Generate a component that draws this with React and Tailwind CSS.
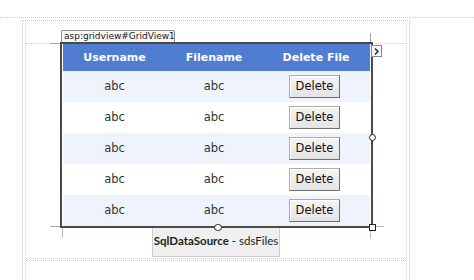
import React from "react";

const rows = [0, 1, 2, 3, 4];

function DeleteButton() {
  return (
    <div className="w-[51px] h-[23px] flex items-center justify-center border border-[#acacac] border-b-[#6f6f6f] border-r-[#6f6f6f] bg-gradient-to-b from-[#f4f4f4] to-[#e4e4e4] text-[11.5px] text-[#111] shadow-[inset_1px_1px_0_#ffffff]">
      Delete
    </div>
  );
}

export default function App() {
  return (
    <div
      className="w-[474px] h-[280px] overflow-hidden bg-white flex flex-col"
      style={{ fontFamily: '"DejaVu Sans", Verdana, sans-serif' }}
    >
      <div className="h-[17px] shrink-0" />
      <div className="h-[3px] shrink-0 border-t border-dotted border-[#cfcfcf]" />
      <div className="ml-[22px] w-[388px] flex-1 border-l border-r border-t border-dotted border-[#cfcfcf] flex">
        <div className="mx-[2px] flex-1 border-l border-r border-dotted border-[#d6d6d6] flex flex-col pt-[9px]">
          {/* tab label */}
          <div className="ml-[35px] w-[114px] h-[12px] border border-b-0 border-[#8e8e8e] rounded-t-[2px] bg-[#f6f6f6] flex items-center pl-[2px] text-[9px] leading-none text-[#1a1a1a] whitespace-nowrap overflow-hidden">
            asp:gridview#GridView1
          </div>

          {/* grid view */}
          <div className="relative ml-[34px] w-[313px] border-2 border-[#4a4a4a] bg-white">
            {/* guide lines */}
            <div className="absolute left-[-36px] top-[-1px] w-[26px] border-t border-dotted border-[#cfcfcf]" />
            <div className="absolute left-[-12px] top-[-1px] w-[10px] border-t border-[#a8a8a8]" />
            <div className="absolute right-[-36px] top-[-1px] w-[32px] border-t border-dotted border-[#cfcfcf]" />
            <div className="absolute right-[0px] top-[-11px] h-[9px] border-l border-[#a8a8a8]" />
            <div className="absolute left-[-12px] bottom-[-1px] w-[10px] border-t border-[#a8a8a8]" />
            <div className="absolute left-[0px] bottom-[-12px] h-[10px] border-l border-[#b8b8b8]" />
            <div className="absolute right-[-13px] bottom-[-1px] w-[11px] border-t border-[#b8b8b8]" />
            <div className="absolute right-[0px] bottom-[-13px] h-[11px] border-l border-[#b8b8b8]" />

            {/* smart tag */}
            <div className="absolute left-full top-[1px] w-[11px] h-[12px] border border-[#7d8aa6] bg-[#f3f6fc] flex items-center justify-center">
              <svg width="5" height="7" viewBox="0 0 5 7">
                <path d="M1 0.5 L4 3.5 L1 6.5" fill="none" stroke="#222" strokeWidth="1.4" />
              </svg>
            </div>

            {/* handles */}
            <div className="absolute right-[-5px] top-[90px] w-[7px] h-[7px] rounded-full border border-[#222] bg-white" />
            <div className="absolute left-[152px] bottom-[-5px] w-[8px] h-[7px] rounded-full border border-[#222] bg-white" />
            <div className="absolute right-[-5px] bottom-[-5px] w-[7px] h-[7px] border border-[#222] bg-white" />

            <div className="px-px">
              <div className="grid grid-cols-[103px_96px_108px] h-[27px] bg-[#507cd1] text-white font-bold text-[11px] items-center pt-px">
                <div className="text-center">Username</div>
                <div className="text-center">Filename</div>
                <div className="text-center">Delete File</div>
              </div>
              {rows.map((i) => (
                <div
                  key={i}
                  className={`grid grid-cols-[103px_96px_108px] h-[31px] items-center text-[11.5px] text-[#333] ${
                    i % 2 === 0 ? "bg-[#eff3fb]" : "bg-white"
                  }`}
                >
                  <div className="text-center">abc</div>
                  <div className="text-center">abc</div>
                  <div className="flex justify-center pr-[3px]">
                    <DeleteButton />
                  </div>
                </div>
              ))}
            </div>
          </div>

          {/* sql data source */}
          <div
            className="ml-[126px] w-[128px] h-[29px] border border-t-0 border-[#cdcdcd] bg-[#efefef] flex items-start justify-center pt-[4px] text-[11.5px] text-[#222]"
            style={{ fontFamily: 'Lato, "Open Sans", sans-serif' }}
          >
            <span className="font-bold">SqlDataSource</span>
            <span>&nbsp;- sdsFiles</span>
          </div>

          {/* bottom dotted lines */}
          <div className="mt-[1px] h-[3px] border-t border-b border-dotted border-[#d6d6d6]" />
        </div>
      </div>
    </div>
  );
}
